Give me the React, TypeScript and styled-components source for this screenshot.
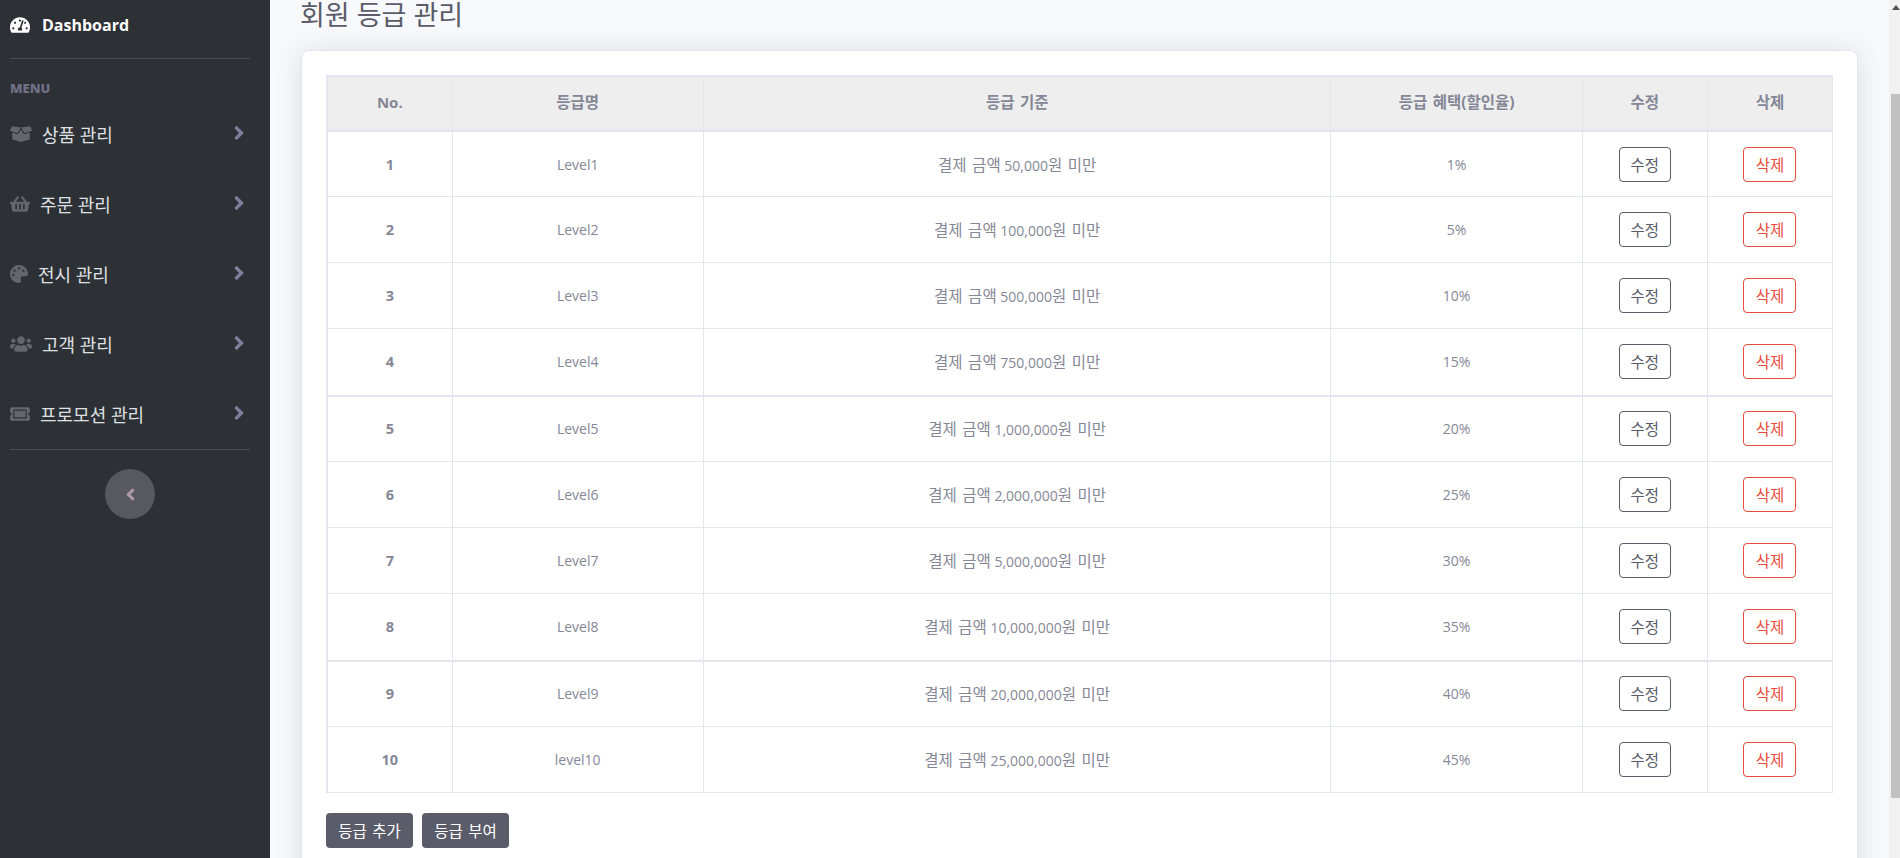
import styled, { createGlobalStyle } from 'styled-components';
import {
  FaAngleLeft,
  FaAngleRight,
  FaBoxOpen,
  FaPalette,
  FaShoppingBasket,
  FaTachometerAlt,
  FaTicketAlt,
  FaUsers,
} from 'react-icons/fa';

const menus = [
  { label: '상품 관리', icon: <FaBoxOpen />, width: 22, gap: 10 },
  { label: '주문 관리', icon: <FaShoppingBasket />, width: 20, gap: 10 },
  { label: '전시 관리', icon: <FaPalette />, width: 18, gap: 10 },
  { label: '고객 관리', icon: <FaUsers />, width: 22, gap: 10 },
  { label: '프로모션 관리', icon: <FaTicketAlt />, width: 20, gap: 10 },
];

const grades = [
  { no: 1, name: 'Level1', limit: '50,000', rate: 1, height: 66 },
  { no: 2, name: 'Level2', limit: '100,000', rate: 5, height: 66 },
  { no: 3, name: 'Level3', limit: '500,000', rate: 10, height: 66 },
  { no: 4, name: 'Level4', limit: '750,000', rate: 15, height: 67 },
  { no: 5, name: 'Level5', limit: '1,000,000', rate: 20, height: 66, heavy: true },
  { no: 6, name: 'Level6', limit: '2,000,000', rate: 25, height: 66 },
  { no: 7, name: 'Level7', limit: '5,000,000', rate: 30, height: 66 },
  { no: 8, name: 'Level8', limit: '10,000,000', rate: 35, height: 67 },
  { no: 9, name: 'Level9', limit: '20,000,000', rate: 40, height: 66, heavy: true },
  { no: 10, name: 'level10', limit: '25,000,000', rate: 45, height: 66 },
];

function App() {
  return (
    <Shell>
      <GlobalStyle />
      <Sidebar>
        <Brand>
          <BrandIcon><FaTachometerAlt /></BrandIcon>
          Dashboard
        </Brand>
        <Divider />
        <MenuHeading>MENU</MenuHeading>
        {menus.map((menu) => (
          <MenuItem key={menu.label}>
            <MenuIcon $width={menu.width} $gap={menu.gap}>{menu.icon}</MenuIcon>
            <MenuLabel>{menu.label}</MenuLabel>
            <MenuArrow><FaAngleRight /></MenuArrow>
          </MenuItem>
        ))}
        <LastDivider />
        <ToggleButton><FaAngleLeft /></ToggleButton>
      </Sidebar>
      <Main>
        <Title>회원 등급 관리</Title>
        <Card>
          <Table>
            <colgroup>
              <col width="125" />
              <col width="251" />
              <col width="627" />
              <col width="251" />
              <col width="125" />
              <col width="125" />
            </colgroup>
            <thead>
              <tr>
                <NoHeadCell>No.</NoHeadCell>
                <HeadCell>등급명</HeadCell>
                <HeadCell>등급 기준</HeadCell>
                <HeadCell>등급 혜택(할인율)</HeadCell>
                <HeadCell>수정</HeadCell>
                <HeadCell>삭제</HeadCell>
              </tr>
            </thead>
            <tbody>
              {grades.map((grade) => (
                <Row key={grade.no} $height={grade.height} $heavy={grade.heavy}>
                  <NoCell>{grade.no}</NoCell>
                  <Cell>{grade.name}</Cell>
                  <Cell><Ko>결제 금액</Ko> {grade.limit}<Ko>원 미만</Ko></Cell>
                  <Cell>{grade.rate}%</Cell>
                  <Cell><EditButton>수정</EditButton></Cell>
                  <Cell><DeleteButton>삭제</DeleteButton></Cell>
                </Row>
              ))}
            </tbody>
          </Table>
          <Actions>
            <ActionButton>등급 추가</ActionButton>
            <ActionButton>등급 부여</ActionButton>
          </Actions>
        </Card>
      </Main>
      <Scrollbar>
        <ScrollArrow />
        <ScrollThumb />
      </Scrollbar>
    </Shell>
  );
}

export default App;

const GlobalStyle = createGlobalStyle`
  html, body {
    margin: 0;
    height: 100%;
    overflow: hidden;
  }

  body {
    font-family: 'Open Sans', 'Noto Sans CJK KR', sans-serif;
    font-size: 14px;
  }
`;

const Shell = styled.div`
  display: flex;
  width: 1900px;
  height: 858px;
  overflow: hidden;
  background: #f8f9fc;
`;

const Sidebar = styled.aside`
  flex: 0 0 270px;
  box-sizing: border-box;
  padding: 14px 20px 0 10px;
  background: #2d3035;
`;

const Brand = styled.div`
  display: flex;
  align-items: center;
  height: 22px;
  font-size: 16px;
  font-weight: 700;
  color: #fff;
`;

const BrandIcon = styled.span`
  display: flex;
  width: 32px;
  font-size: 20px;
`;

const Divider = styled.hr`
  margin: 22px 0 0;
  border: 0;
  border-top: 1px solid #4a4c51;
`;

const LastDivider = styled(Divider)`
  margin-top: 0;
`;

const MenuHeading = styled.div`
  margin-top: 23px;
  margin-bottom: 5px;
  font-size: 13px;
  line-height: 12px;
  font-weight: 800;
  color: #6f6f85;
`;

const MenuItem = styled.div`
  display: flex;
  align-items: center;
  height: 70px;
  color: #dfe0e3;
`;

const MenuIcon = styled.span<{ $width: number; $gap: number }>`
  display: flex;
  flex: 0 0 ${({ $width }) => $width}px;
  margin-right: ${({ $gap }) => $gap}px;
  font-size: ${({ $width }) => $width}px;
  color: #64666b;
`;

const MenuLabel = styled.span`
  flex: 1;
  font-size: 18px;
`;

const MenuArrow = styled.span`
  display: flex;
  margin: -3px 0 0 0;
  font-size: 22px;
  color: #7f7f9c;
`;

const ToggleButton = styled.div`
  display: flex;
  align-items: center;
  justify-content: center;
  width: 50px;
  height: 50px;
  margin: 19px auto 0;
  border-radius: 50%;
  font-size: 19px;
  color: #b09aa8;
  background: #58595e;
`;

const Main = styled.main`
  flex: 1;
  min-width: 0;
  padding: 0 31px;
`;

const Title = styled.h1`
  height: 50px;
  margin: -2px 0 2px -1px;
  font-size: 27px;
  line-height: 34px;
  font-weight: 400;
  color: #5a5c69;
`;

const Card = styled.section`
  box-sizing: border-box;
  height: 860px;
  padding: 24px 24px 0;
  border: 1px solid #e3e6f0;
  border-radius: 8px;
  background: #fff;
  box-shadow: 0 2px 28px rgba(58, 59, 69, 0.15);
`;

const Table = styled.table`
  width: 1507px;
  table-layout: fixed;
  border-collapse: collapse;
  border-top: 2px solid #e3e6f0;
  border-left: 2px solid #e3e6f0;
  color: #858796;
`;

const HeadCell = styled.th`
  height: 49px;
  padding: 0 0 3px;
  border: 1px solid #e3e6f0;
  border-bottom: 3px solid #e3e6f0;
  font-size: 15.5px;
  font-weight: 700;
  word-spacing: 1.5px;
  text-align: center;
  background: #eeeeee;
`;

const NoHeadCell = styled(HeadCell)`
  font-size: 15px;
`;

const Row = styled.tr<{ $height: number; $heavy?: boolean }>`
  height: ${({ $height }) => $height}px;

  td {
    border-top-width: ${({ $heavy }) => ($heavy ? 2 : 1)}px;
  }
`;

const Cell = styled.td`
  padding: 0;
  border: 1px solid #e3e6f0;
  text-align: center;
`;

const NoCell = styled(Cell)`
  font-size: 14.5px;
  font-weight: 700;
`;

const Ko = styled.span`
  font-size: 15.5px;
  word-spacing: 1.5px;
`;

const EditButton = styled.button`
  box-sizing: border-box;
  width: 52px;
  height: 35px;
  padding: 0;
  border: 1px solid #5a5c69;
  border-radius: 4px;
  font: inherit;
  font-size: 15.5px;
  color: #5a5c69;
  background: #fff;
`;

const DeleteButton = styled(EditButton)`
  width: 53px;
  border-color: #e74c3c;
  color: #e74c3c;
`;

const Actions = styled.div`
  display: flex;
  gap: 9px;
  margin-top: 20px;
`;

const ActionButton = styled.button`
  box-sizing: border-box;
  width: 87px;
  height: 35px;
  padding: 0;
  border: 0;
  border-radius: 4px;
  font: inherit;
  font-size: 15.5px;
  word-spacing: 1.5px;
  color: #fff;
  background: #5a5c69;
`;

const Scrollbar = styled.div`
  position: relative;
  flex: 0 0 11px;
  background: #f1f1f1;
`;

const ScrollArrow = styled.div`
  position: absolute;
  top: 5px;
  left: 3px;
  border-right: 4px solid transparent;
  border-bottom: 5px solid #505050;
  border-left: 4px solid transparent;
`;

const ScrollThumb = styled.div`
  position: absolute;
  top: 94px;
  left: 2px;
  right: 0;
  height: 704px;
  background: #c1c1c1;
`;
